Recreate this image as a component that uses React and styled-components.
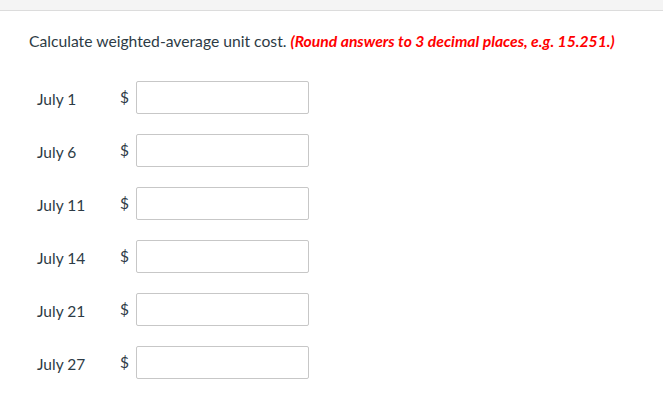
import React from "react";
import styled, { createGlobalStyle } from "styled-components";

const Global = createGlobalStyle`
  html, body { margin: 0; padding: 0; background: #fff; }
  body { font-family: Lato, "Open Sans", sans-serif; color: #2d3b45; }
  #root { min-height: 100vh; }
`;

const TopBar = styled.div`
  height: 10px;
  background: #f4f4f4;
  border-bottom: 1px solid #dcdcdc;
`;

const Content = styled.div`
  padding: 20px 0 0 29px;
`;

const Prompt = styled.p`
  margin: 0;
  font-size: 15.7px;
  line-height: 20px;
  color: #2d3b45;
`;

const Hint = styled.span`
  color: #ff0000;
  font-style: italic;
  font-weight: 700;
`;

const Rows = styled.div`
  display: flex;
  flex-direction: column;
  gap: 20px;
  margin-top: 30px;
  padding-left: 8px;
`;

const Row = styled.div`
  display: flex;
  align-items: center;
  height: 33px;
`;

const Label = styled.span`
  width: 83px;
  font-size: 15.5px;
  color: #2d3b45;
  padding-top: 2px;
`;

const Dollar = styled.span`
  width: 16px;
  font-size: 15.5px;
  color: #2d3b45;
  padding-bottom: 2px;
`;

const Field = styled.input`
  box-sizing: border-box;
  width: 173px;
  height: 33px;
  border: 1px solid #c7c7c7;
  border-radius: 2px;
  background: #fff;
  outline: none;
`;

const dates = ["July 1", "July 6", "July 11", "July 14", "July 21", "July 27"];

export default function App() {
  return (
    <>
      <Global />
      <TopBar />
      <Content>
        <Prompt>
          Calculate weighted-average unit cost.{" "}
          <Hint>(Round answers to 3 decimal places, e.g. 15.251.)</Hint>
        </Prompt>
        <Rows>
          {dates.map((d) => (
            <Row key={d}>
              <Label>{d}</Label>
              <Dollar>$</Dollar>
              <Field type="text" />
            </Row>
          ))}
        </Rows>
      </Content>
    </>
  );
}
